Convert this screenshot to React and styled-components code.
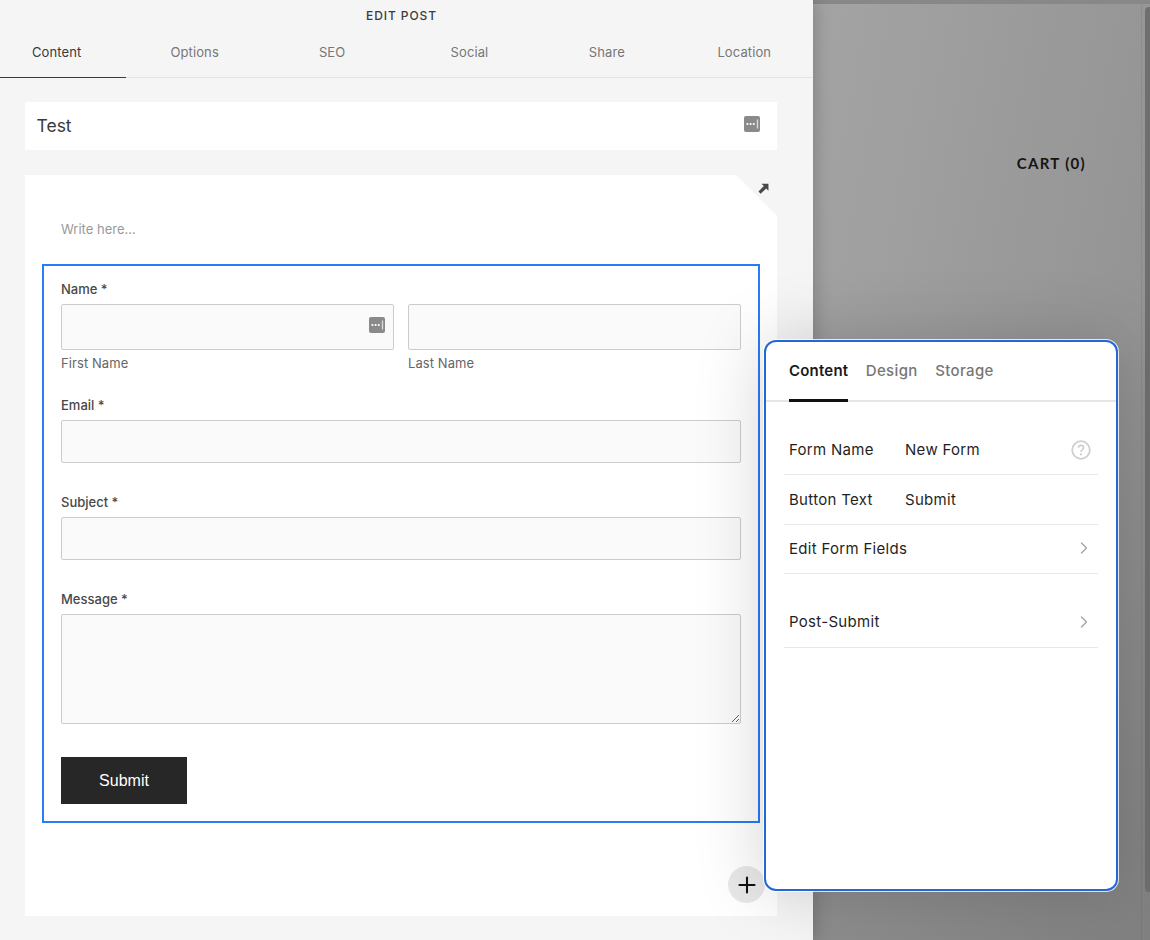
import React from 'react'
import styled, { createGlobalStyle } from 'styled-components'
import { ChevronRight, Plus } from 'lucide-react'

const GlobalStyle = createGlobalStyle`
    html, body {
        margin: 0;
        padding: 0;
        font-family: "Inter", "Liberation Sans", sans-serif;
    }
    * {
        box-sizing: border-box;
    }
`;

function PassIcon() {
    return (
        <PassSvg viewBox="0 0 16 16">
            <rect width="16" height="16" rx="2" fill="#8a8a8a" />
            <circle cx="3.4" cy="8" r="1.1" fill="#fff" />
            <circle cx="6.6" cy="8" r="1.1" fill="#fff" />
            <circle cx="9.8" cy="8" r="1.1" fill="#fff" />
            <rect x="12.8" y="3.5" width="1.4" height="9" fill="#d8d8d8" />
        </PassSvg>
    )
}

function App() {
    const tabs = ['Content', 'Options', 'SEO', 'Social', 'Share', 'Location']

    return (
        <Page>
            <GlobalStyle />
            <Panel>
                <PanelTitle>EDIT POST</PanelTitle>
                <Tabs>
                    {tabs.map((tab, i) => (
                        <Tab key={tab} $active={i === 0}>{tab}</Tab>
                    ))}
                </Tabs>
                <PanelBody>
                    <TitleRow>
                        <span>Test</span>
                        <TitleIcon><PassIcon /></TitleIcon>
                    </TitleRow>
                    <EditorWrap>
                        <EditorCard>
                            <Placeholder>Write here...</Placeholder>
                            <FormBlock>
                                <Label>Name *</Label>
                                <NameRow>
                                    <NameField>
                                        <InputWrap>
                                            <Input $tall type="text" />
                                            <InputIcon><PassIcon /></InputIcon>
                                        </InputWrap>
                                        <Caption>First Name</Caption>
                                    </NameField>
                                    <NameField>
                                        <Input $tall type="text" />
                                        <Caption>Last Name</Caption>
                                    </NameField>
                                </NameRow>
                                <Field $first>
                                    <Label>Email *</Label>
                                    <Input type="text" />
                                </Field>
                                <Field>
                                    <Label>Subject *</Label>
                                    <Input type="text" />
                                </Field>
                                <Field>
                                    <Label>Message *</Label>
                                    <TextArea />
                                </Field>
                                <SubmitButton type="button">Submit</SubmitButton>
                            </FormBlock>
                        </EditorCard>
                        <ExpandIcon viewBox="0 0 12 12">
                            <path d="M3.8 0.8H11.4V8.4L8.9 5.9 2.9 11.8 0.5 9.4 6.4 3.4Z" fill="#484848" />
                        </ExpandIcon>
                        <AddButton>
                            <Plus size={26} strokeWidth={1.9} color="#111" />
                        </AddButton>
                    </EditorWrap>
                </PanelBody>
            </Panel>

            <Preview>
                <CartLink>CART (0)</CartLink>
                <ScrollTrack>
                    <ScrollThumb />
                </ScrollTrack>
            </Preview>

            <Popover>
                <PopoverTabs>
                    <PopoverTab $active>Content</PopoverTab>
                    <PopoverTab>Design</PopoverTab>
                    <PopoverTab>Storage</PopoverTab>
                </PopoverTabs>
                <Rows>
                    <Row>
                        <RowLabel>Form Name</RowLabel>
                        <RowValue>New Form</RowValue>
                        <HelpIcon viewBox="0 0 20 20">
                            <circle cx="10" cy="10" r="8.8" fill="none" stroke="#cfcfcf" strokeWidth="1.8" />
                            <path d="M7.4 7.8C7.5 6.3 8.6 5.4 10 5.4 11.5 5.4 12.6 6.4 12.6 7.7 12.6 9.6 10 9.8 10 11.9" fill="none" stroke="#cfcfcf" strokeWidth="1.6" />
                            <circle cx="10" cy="14.4" r="1.1" fill="#cfcfcf" />
                        </HelpIcon>
                    </Row>
                    <Row>
                        <RowLabel>Button Text</RowLabel>
                        <RowValue>Submit</RowValue>
                    </Row>
                    <Row $short>
                        <span>Edit Form Fields</span>
                        <Chevron size={20} strokeWidth={1.6} />
                    </Row>
                    <Row $spaced>
                        <span>Post-Submit</span>
                        <Chevron size={20} strokeWidth={1.6} />
                    </Row>
                </Rows>
            </Popover>
        </Page>
    )
}

export default App


const Page = styled.div`
    position: relative;
    display: flex;
    width: 1150px;
    height: 940px;
    overflow: hidden;
`;

const Panel = styled.div`
    position: relative;
    z-index: 1;
    display: flex;
    flex-direction: column;
    flex: 0 0 813px;
    background-color: #f5f5f5;
    box-shadow: 0 0 18px rgba(0, 0, 0, 0.25);
`;

const PanelTitle = styled.div`
    height: 33px;
    padding: 8px 10px 0 0;
    text-align: center;
    font-size: 12px;
    line-height: 16px;
    font-weight: 500;
    letter-spacing: 0.9px;
    color: #3c3c3c;
`;

const Tabs = styled.div`
    display: flex;
    height: 45px;
    border-bottom: 1px solid #e3e3e3;
`;

const Tab = styled.div`
    flex: 0 0 137.4px;
    height: 45px;
    padding-top: 11px;
    text-align: center;
    font-size: 13px;
    line-height: 16px;
    letter-spacing: 0.1px;
    color: #777;

    ${props => props.$active && `
        flex-basis: 126px;
        padding-left: 32px;
        text-align: left;
        color: #3a3a3a;
        border-bottom: 1px solid #3a3a3a;
    `}
`;

const PanelBody = styled.div`
    display: flex;
    flex-direction: column;
    flex: 1;
    padding: 24px 36px 24px 25px;
`;

const TitleRow = styled.div`
    display: flex;
    align-items: center;
    justify-content: space-between;
    height: 48px;
    margin-bottom: 25px;
    padding: 0 17px 1px 11.5px;
    background-color: #fff;
    font-size: 17.5px;
    color: #3a3a3a;
`;

const TitleIcon = styled.div`
    margin-bottom: 3px;
`;

const PassSvg = styled.svg`
    display: block;
    width: 16px;
    height: 16px;
`;

const EditorWrap = styled.div`
    position: relative;
    flex: 1;
`;

const EditorCard = styled.div`
    height: 100%;
    padding: 46px 17px 0;
    background-color: #fff;
    clip-path: polygon(0 0, 711px 0, 100% 41px, 100% 100%, 0 100%);
`;

const Placeholder = styled.div`
    height: 43px;
    padding-left: 19px;
    font-size: 13px;
    line-height: 16px;
    color: #999;
`;

const FormBlock = styled.div`
    width: 718px;
    height: 559px;
    padding: 14px 17px 17px;
    border: 2px solid #2a7bf6;
`;

const Label = styled.div`
    height: 18px;
    margin-bottom: 6px;
    font-size: 13px;
    line-height: 18px;
    font-weight: 500;
    color: #484848;
`;

const NameRow = styled.div`
    display: flex;
    gap: 14px;
`;

const NameField = styled.div`
    flex: 1;
`;

const InputWrap = styled.div`
    position: relative;
`;

const InputIcon = styled.div`
    position: absolute;
    top: 13px;
    right: 9px;
`;

const Input = styled.input`
    display: block;
    width: 100%;
    height: ${props => (props.$tall ? '46px' : '43px')};
    background-color: #fafafa;
    border: 1px solid #ccc;
    border-radius: 2px;
    outline: none;
`;

const TextArea = styled.textarea`
    display: block;
    width: 100%;
    height: 110px;
    background-color: #fafafa;
    border: 1px solid #ccc;
    border-radius: 2px;
    outline: none;
`;

const Caption = styled.div`
    height: 18px;
    margin-top: 4px;
    font-size: 13px;
    line-height: 18px;
    letter-spacing: 0.08px;
    color: #666;
`;

const Field = styled.div`
    margin-top: ${props => (props.$first ? '24px' : '30px')};
`;

const SubmitButton = styled.button`
    display: block;
    width: 126px;
    height: 47px;
    margin-top: 33px;
    padding: 0;
    border: none;
    background-color: #272727;
    color: #fff;
    font-family: "Liberation Sans", sans-serif;
    font-size: 16px;
`;

const ExpandIcon = styled.svg`
    position: absolute;
    top: 8px;
    right: 8px;
    width: 11px;
    height: 11px;
`;

const AddButton = styled.div`
    position: absolute;
    right: 12px;
    bottom: 13px;
    display: flex;
    align-items: center;
    justify-content: center;
    width: 37px;
    height: 37px;
    border-radius: 50%;
    background-color: #e8e8e8;
`;

const Preview = styled.div`
    position: relative;
    flex: 1;
    padding: 150px 64px 0 0;
    text-align: right;
    border-top: 4px solid #888;
    background:
        linear-gradient(180deg, rgba(0, 0, 0, 0) 35%, rgba(0, 0, 0, 0.1) 100%),
        linear-gradient(100deg, #a4a4a4 0%, #8f8f8f 100%);
`;

const CartLink = styled.div`
    font-family: "Lato", sans-serif;
    font-size: 15px;
    line-height: 18px;
    font-weight: 700;
    letter-spacing: 1.3px;
    color: #141414;
`;

const ScrollTrack = styled.div`
    position: absolute;
    top: 0;
    right: 0;
    bottom: 0;
    width: 9px;
    padding-top: 3px;
    display: flex;
    justify-content: flex-end;
    border-left: 1px solid rgba(0, 0, 0, 0.06);
`;

const ScrollThumb = styled.div`
    width: 5px;
    height: 885px;
    border-radius: 4px 0 0 4px;
    background-color: #6f6f6f;
`;

const Popover = styled.div`
    position: absolute;
    z-index: 2;
    top: 340px;
    left: 764px;
    width: 354px;
    height: 551px;
    border: 2px solid #2468d8;
    border-radius: 12px;
    background-color: #fff;
    box-shadow: 0 0 0 1px rgba(255, 255, 255, 0.8), 0 0 70px rgba(0, 0, 0, 0.18);
`;

const PopoverTabs = styled.div`
    display: flex;
    gap: 17.5px;
    height: 60px;
    padding-left: 23px;
    border-bottom: 2px solid #e6e6e6;
`;

const PopoverTab = styled.div`
    height: 60px;
    padding-top: 19px;
    font-size: 15px;
    line-height: 20px;
    font-weight: ${props => (props.$active ? 600 : 500)};
    letter-spacing: ${props => (props.$active ? '0.2px' : '0.35px')};
    color: ${props => (props.$active ? '#1a1a1a' : '#777')};
    border-bottom: ${props => (props.$active ? '3px solid #111' : 'none')};
`;

const Rows = styled.div`
    margin-top: 23px;
    padding: 0 18px;
`;

const Row = styled.div`
    display: flex;
    align-items: center;
    justify-content: space-between;
    height: ${props => (props.$short ? '49px' : '50px')};
    margin-top: ${props => (props.$spaced ? '24px' : '0')};
    padding: 0 4px ${props => (props.$spaced || props.$short ? '2px' : '0')} 5px;
    border-bottom: 1px solid #e8e8e8;
    font-size: 15px;
    letter-spacing: 0.3px;
    color: #1f1f1f;
`;

const RowLabel = styled.span`
    flex: 0 0 116px;
`;

const RowValue = styled.span`
    flex: 1;
`;

const HelpIcon = styled.svg`
    width: 20px;
    height: 20px;
    margin-right: 3px;
`;

const Chevron = styled(ChevronRight)`
    color: #a3a3a3;
`;
